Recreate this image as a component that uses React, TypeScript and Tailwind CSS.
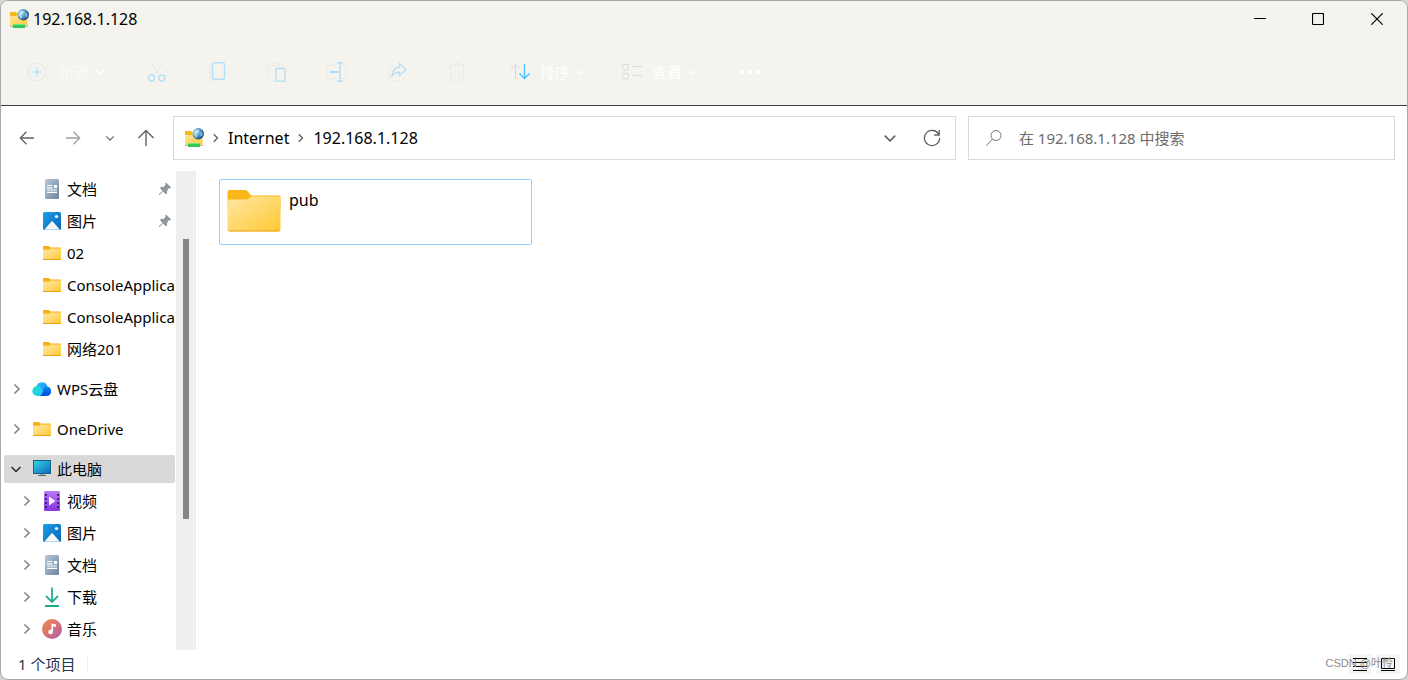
import * as React from "react";

type IconProps = { className?: string };

const Chevron = ({ className = "" }: IconProps) => (
  <svg viewBox="0 0 12 12" fill="none" stroke="currentColor" className={`shrink-0 ${className}`}>
    <path d="M4.500 1.500 9 6 4.500 10.500" strokeWidth="1.600" />
  </svg>
);

const ChevronDown = ({ className = "" }: IconProps) => (
  <svg viewBox="0 0 12 12" fill="none" stroke="currentColor" className={`shrink-0 ${className}`}>
    <path d="M1.500 4 6 8.500 10.500 4" strokeWidth="1.400" />
  </svg>
);

const NetworkFolder = () => (
  <svg viewBox="0 0 20 20" className="size-5 shrink-0">
    <defs>
      <linearGradient id="netBody" x1="0" y1="0" x2="1" y2="1">
        <stop offset="0" stopColor="#ffe59a" />
        <stop offset="1" stopColor="#ffca3e" />
      </linearGradient>
      <radialGradient id="globe" cx=".35" cy=".35" r=".75">
        <stop offset="0" stopColor="#b9e0f2" />
        <stop offset=".5" stopColor="#4a96c8" />
        <stop offset="1" stopColor="#123a63" />
      </radialGradient>
    </defs>
    <path d="M1 3.700Q1 3 1.700 3H7l2 2v3H1z" fill="#f8b517" />
    <path d="M1 7h6l2-1.500h9.500V17H1z" fill="url(#netBody)" />
    <path d="M1 17.500h18" stroke="#b8b8b8" />
    <rect x="4" y="15" width="12" height="4" fill="#35c759" />
    <path d="M4 15.500h12" stroke="#66ec83" />
    <circle cx="14.300" cy="5.700" r="5.700" fill="url(#globe)" />
    <path d="M11 2.500q2.500-1.500 4 0l-1 2-2 1 1.500 2.500-1.500 2-2.500-3.500q-.5-2 1.500-4z" fill="#d4edf5" opacity=".65" />
    <path d="m16.500 4 2 1.500-.5 3-1.500-1z" fill="#c4e7f1" opacity=".6" />
  </svg>
);

const SmallFolder = () => (
  <svg viewBox="0 0 20 20" className="size-5 shrink-0">
    <defs>
      <linearGradient id="folderSmall" x1="0" y1="0" x2="1" y2="1">
        <stop offset="0" stopColor="#ffe8a5" />
        <stop offset="1" stopColor="#ffc93a" />
      </linearGradient>
    </defs>
    <path d="M1 3.700Q1 3 1.700 3H7l1.500 1.500H18.400q.6 0 .6.600V8H1z" fill="#f6b21b" />
    <path d="M1 6.800h6.300L9 5.500h10v11H1z" fill="url(#folderSmall)" />
    <path d="M1 16.500h18" stroke="#e5a21c" />
  </svg>
);

const LargeFolder = () => (
  <svg viewBox="0 0 54 44" className="h-11 w-[54px] shrink-0">
    <defs>
      <linearGradient id="folderLarge" x1="0" y1="0" x2="1" y2="1">
        <stop offset="0" stopColor="#ffe8a5" />
        <stop offset="1" stopColor="#ffc732" />
      </linearGradient>
    </defs>
    <path d="M.5 2q0-2 2-2H18q1.500 0 2.500 1l3.500 4.500h27.500q2 0 2 2V20H.5z" fill="#f9b818" />
    <path d="M.5 11.500Q.5 9.500 2.500 9.500h16q2 0 3.500-1l1.500-1.300q1-.7 2.500-.7h25.500q2 0 2 2v31q0 2-2 2h-49q-2 0-2-2z" fill="url(#folderLarge)" />
    <path d="M1 40q.5 1 1.500 1h49q1 0 1.500-1" fill="none" stroke="#e8a520" />
  </svg>
);

const DocumentIcon = () => (
  <svg viewBox="0 0 20 20" className="size-5 shrink-0">
    <defs>
      <linearGradient id="doc" x1="0" y1="0" x2="1" y2="1">
        <stop offset="0" stopColor="#b6c8d8" />
        <stop offset="1" stopColor="#6c859f" />
      </linearGradient>
    </defs>
    <rect x="3" y="0" width="14" height="20" rx="1.500" fill="url(#doc)" />
    <path d="M5 6.500h5.500M5 8.800h5.500M5 11h10M5 13.300h10" stroke="#fff" strokeWidth="1.200" />
    <rect x="12" y="6" width="3" height="3" fill="#fff" />
  </svg>
);

const PictureIcon = () => (
  <svg viewBox="0 0 20 20" className="size-5 shrink-0">
    <defs>
      <linearGradient id="pic" x1="0" y1="0" x2="1" y2="1">
        <stop offset="0" stopColor="#1ca0e8" />
        <stop offset="1" stopColor="#0a62b5" />
      </linearGradient>
    </defs>
    <rect x="1" y="1" width="18" height="18" rx="1.500" fill="url(#pic)" />
    <path d="m2.500 18.200 7-7.700q.6-.7 1.200 0l7 7.700q-.5.500-1.200.5h-13q-.7 0-1-.5z" fill="#f2f8fd" />
    <circle cx="14.500" cy="5.500" r="1.600" fill="#fff" />
  </svg>
);

const CloudIcon = () => (
  <svg viewBox="0 0 20 20" className="size-5 shrink-0">
    <defs>
      <linearGradient id="cloudLeft" x1="0" y1="0" x2="1" y2="1">
        <stop offset="0" stopColor="#1ce0c8" />
        <stop offset="1" stopColor="#23c3ff" />
      </linearGradient>
      <linearGradient id="cloudTop" x1="0" y1="0" x2="1" y2="1">
        <stop offset="0" stopColor="#2cc4ff" />
        <stop offset="1" stopColor="#0a7bf5" />
      </linearGradient>
      <linearGradient id="cloudRight" x1="0" y1="0" x2="0" y2="1">
        <stop offset="0" stopColor="#0a7bf5" />
        <stop offset="1" stopColor="#0650dc" />
      </linearGradient>
    </defs>
    <path d="M4.500 8a5.500 5.500 0 0 1 10.800-.5L14 16H6z" fill="url(#cloudTop)" />
    <path d="M5.300 7a5 5 0 0 1 4.200 2.300L13 17H5.300a5 5 0 0 1 0-10z" fill="url(#cloudLeft)" />
    <path d="M8 17c3-2 3-7.500 7-9.500A4.800 4.800 0 0 1 15 17z" fill="url(#cloudRight)" />
  </svg>
);

const ComputerIcon = () => (
  <svg viewBox="0 0 20 20" className="size-5 shrink-0">
    <defs>
      <linearGradient id="screen" x1="0" y1="0" x2="1" y2="1">
        <stop offset="0" stopColor="#35d6df" />
        <stop offset="1" stopColor="#0b6ac0" />
      </linearGradient>
    </defs>
    <rect x="1.500" y="1.500" width="17" height="13" fill="url(#screen)" stroke="#185f86" />
    <path d="M8 15h4v2H8z" fill="#9aa7ae" />
    <path d="M6 16.500h8" stroke="#596970" />
  </svg>
);

const VideoIcon = () => (
  <svg viewBox="0 0 20 20" className="size-5 shrink-0">
    <defs>
      <linearGradient id="video" x1="0" y1="0" x2="0" y2="1">
        <stop offset="0" stopColor="#b77af3" />
        <stop offset="1" stopColor="#8636dd" />
      </linearGradient>
    </defs>
    <rect x="2" y="0" width="16" height="20" rx="1.500" fill="url(#video)" />
    <path d="M4 3v16M16 3v16" stroke="#45207b" strokeWidth="2" strokeDasharray="2 2" />
    <path d="M7 5.500v9l6.500-4.500z" fill="#f6efff" />
  </svg>
);

const DownloadIcon = () => (
  <svg viewBox="0 0 20 20" fill="none" className="size-5 shrink-0">
    <path d="M10 .5V14.500M4 9l6 6 6-6" stroke="#20ad94" strokeWidth="1.800" />
    <path d="M3 19h14" stroke="#1aaf82" strokeWidth="2" />
  </svg>
);

const MusicIcon = () => (
  <svg viewBox="0 0 20 20" className="size-5 shrink-0">
    <defs>
      <linearGradient id="music" x1="0" y1="0" x2="1" y2="1">
        <stop offset="0" stopColor="#f28a50" />
        <stop offset=".5" stopColor="#d77474" />
        <stop offset="1" stopColor="#a65bb5" />
      </linearGradient>
    </defs>
    <circle cx="10" cy="10" r="10" fill="url(#music)" />
    <path d="M9.500 4.500 14 5.500V8l-3-.7v5.500a2.300 2.300 0 1 1-1.500-2z" fill="#fff" />
  </svg>
);

const PinIcon = () => (
  <svg viewBox="0 0 14 14" className="ml-auto mr-[3px] size-3.5 shrink-0">
    <path d="M8.300.8 13.200 5.500 12 6.500 10.800 6.300 9 9l.2 2.200-1.200 1-3-2.700L1.500 13H.8v-.8L4.500 9 2 6l1-1.200 2.300.1L7.500 3l-.3-1.300z" fill="#8b969e" />
  </svg>
);

// Line icons of the command bar: pale frame plus blue accent
const toolIcons = [
  {
    label: "剪切",
    icon: (
      <>
        <path d="M5 1.500 13 14M15 1.500 7 14" stroke="#e7e8e5" />
        <circle cx="4.500" cy="16" r="3" stroke="#b5e0f7" strokeWidth="1.400" />
        <circle cx="14.800" cy="16" r="3" stroke="#b5e0f7" strokeWidth="1.400" />
      </>
    ),
  },
  {
    label: "复制",
    icon: (
      <>
        <path d="M5 4Q3 4 3 6v11q0 2.500 2.500 2.500h7" stroke="#e9eae7" />
        <rect x="5.500" y=".7" width="12" height="16.500" rx="2" stroke="#b5e0f7" strokeWidth="1.400" />
      </>
    ),
  },
  {
    label: "粘贴",
    icon: (
      <>
        <path d="M6 2H3Q1.500 2 1.500 3.500v14Q1.500 19 3 19h5M12 2h2q1.500 0 1.500 1.500V6" stroke="#e9eae7" />
        <rect x="5.500" y=".7" width="7" height="3" rx="1.500" stroke="#e9eae7" />
        <rect x="9" y="6.500" width="9" height="13" rx="1.500" stroke="#b5e0f7" strokeWidth="1.400" />
      </>
    ),
  },
  {
    label: "重命名",
    icon: (
      <>
        <path d="M11 3H3Q.5 3 .5 5.500v8Q.5 16.500 3 16.500h8M15 3h2q2.500 0 2.500 2.500v8q0 3-2.500 3h-2" stroke="#e9eae7" />
        <path d="M3 10h8.500" stroke="#a9dcf7" strokeWidth="2" />
        <path d="M10 .8h6M10 19.300h6M13 1v18.500" stroke="#b5e0f7" strokeWidth="1.500" />
      </>
    ),
  },
  {
    label: "共享",
    icon: (
      <>
        <path d="M8 3H4.500Q2 3 2 5.500v11Q2 19 4.500 19H14q2.500 0 2.500-2.500V15" stroke="#e9eae7" />
        <path d="M12.500 1.500 19 7.500l-6.500 6v-3.200Q8 10 5 14q.5-8 7.500-9z" stroke="#b5e0f7" strokeWidth="1.400" />
      </>
    ),
  },
  {
    label: "删除",
    icon: (
      <path d="M1.500 3.500h17M7.500 3.500a2.500 2.500 0 0 1 5 0M3 3.500l1.500 14q.2 2 2 2h7q1.800 0 2-2L17 3.500M8 8.500v6.500M12 8.500v6.500" stroke="#e9eae7" strokeWidth="1.200" />
    ),
  },
];

type TreeItem = {
  name: string;
  icon: React.ReactNode;
  pinned?: boolean;
  expandable?: boolean;
};

const quickAccess: TreeItem[] = [
  { name: "文档", icon: <DocumentIcon />, pinned: true },
  { name: "图片", icon: <PictureIcon />, pinned: true },
  { name: "02", icon: <SmallFolder /> },
  { name: "ConsoleApplication1", icon: <SmallFolder /> },
  { name: "ConsoleApplication2", icon: <SmallFolder /> },
  { name: "网络201", icon: <SmallFolder /> },
];

const computerItems: TreeItem[] = [
  { name: "视频", icon: <VideoIcon />, expandable: true },
  { name: "图片", icon: <PictureIcon />, expandable: true },
  { name: "文档", icon: <DocumentIcon />, expandable: true },
  { name: "下载", icon: <DownloadIcon />, expandable: true },
  { name: "音乐", icon: <MusicIcon />, expandable: true },
];

const TreeRow = ({ name, icon, pinned, expandable }: TreeItem) => (
  <button className="flex h-7 w-full items-center gap-1 overflow-hidden pl-4 text-left">
    <span className="flex w-[18px] shrink-0">
      {expandable && <Chevron className="size-3 text-[#858585]" />}
    </span>
    {icon}
    <span className="ml-px whitespace-nowrap">{name}</span>
    {pinned && <PinIcon />}
  </button>
);

const RootRow = ({ name, icon, open }: TreeItem & { open?: boolean }) => (
  <button
    className={`flex h-7 w-full items-center gap-1 rounded-xs pl-1.5 text-left ${open ? "bg-[#d9d9d9]" : ""}`}
  >
    <span className="flex w-[18px] shrink-0">
      {open ? (
        <ChevronDown className="size-3 text-[#222]" />
      ) : (
        <Chevron className="size-3 text-[#858585]" />
      )}
    </span>
    {icon}
    <span className="ml-px whitespace-nowrap">{name}</span>
  </button>
);

const TitleBar = () => (
  <header className="flex h-9 items-center justify-between pl-2">
    <div className="flex items-center gap-1">
      <NetworkFolder />
      <h1 className="text-base">192.168.1.128</h1>
    </div>
    <div className="flex">
      <button aria-label="最小化" className="flex h-9 w-[58px] items-center justify-center">
        <svg viewBox="0 0 12 12" className="size-3" stroke="#000">
          <path d="M0 5.500h12" />
        </svg>
      </button>
      <button aria-label="最大化" className="flex h-9 w-[58px] items-center justify-center">
        <svg viewBox="0 0 12 12" className="size-3" fill="none" stroke="#000">
          <rect x=".5" y=".5" width="11" height="11" rx="1" strokeWidth="1.200" />
        </svg>
      </button>
      <button aria-label="关闭" className="flex h-9 w-[60px] items-center justify-center">
        <svg viewBox="0 0 12 12" className="size-3" stroke="#000">
          <path d="m.3.3 11.400 11.400M11.700.3.3 11.700" strokeWidth="1.200" />
        </svg>
      </button>
    </div>
  </header>
);

const CommandBar = () => (
  <div className="flex h-[69px] items-center border-b border-[#3c3c3c] pt-0.5 pl-[26px] text-[15px] text-white">
    <button className="flex w-[106px] items-center">
      <svg viewBox="0 0 20 20" className="size-5" fill="none">
        <circle cx="10" cy="10" r="9" stroke="#e7e8e5" />
        <path d="M10 5.500v9M5.500 10h9" stroke="#a9dcf7" strokeWidth="1.200" />
      </svg>
      <span className="ml-3 text-[#fafaf8]">新建</span>
      <ChevronDown className="ml-1.5 size-2.5" />
    </button>
    <div className="flex gap-3">
      {toolIcons.map(({ label, icon }) => (
        <button key={label} aria-label={label} className="flex h-12 w-12 items-center justify-center">
          <svg viewBox="0 0 20 20" className="size-5" fill="none">
            {icon}
          </svg>
        </button>
      ))}
    </div>
    <div className="ml-2.5 h-9 w-px bg-[#f1f1ec]" />
    <button className="ml-[18px] flex items-center">
      <svg viewBox="0 0 20 20" className="size-5" fill="none">
        <path d="M5.500 17V2.500M.5 7.500l5-5 5 5" stroke="#d9dad7" />
        <path d="M14.500 2v15M9.500 11.500l5 5 5-5" stroke="#4cc2ff" strokeWidth="1.400" />
      </svg>
      <span className="ml-2.5">排序</span>
      <ChevronDown className="ml-1.5 size-2.5" />
    </button>
    <button className="ml-9 flex items-center">
      <svg viewBox="0 0 20 20" className="size-5" fill="none" stroke="#d9dad7">
        <rect x=".5" y="2.500" width="6" height="5.500" rx="1.500" />
        <rect x=".5" y="11.500" width="6" height="5.500" rx="1.500" />
        <path d="M10 4.500h10M10 13.500h10" />
      </svg>
      <span className="ml-2.5">查看</span>
      <ChevronDown className="ml-1.5 size-2.5" />
    </button>
    <button aria-label="更多" className="ml-10 flex items-center">
      <svg viewBox="0 0 24 20" className="h-5 w-6" fill="currentColor">
        <circle cx="4" cy="10" r="2.200" />
        <circle cx="12" cy="10" r="2.200" />
        <circle cx="20" cy="10" r="2.200" />
      </svg>
    </button>
  </div>
);

const NavigationBar = () => (
  <div className="flex h-16 items-center gap-[18px] pr-3 pl-[18px]">
    <nav className="flex items-center text-[#616161]">
      <button aria-label="后退">
        <svg viewBox="0 0 16 16" className="size-4" fill="none" stroke="currentColor">
          <path d="M15 8H1.500M7.500 1.800 1.300 8l6.200 6.200" strokeWidth="1.300" />
        </svg>
      </button>
      <button aria-label="前进" className="ml-[30px] text-[#a0a0a0]">
        <svg viewBox="0 0 16 16" className="size-4" fill="none" stroke="currentColor">
          <path d="M1 8h13.500M8.500 1.800 14.700 8l-6.200 6.200" strokeWidth="1.300" />
        </svg>
      </button>
      <button aria-label="最近浏览的位置" className="ml-6">
        <ChevronDown className="size-2.5" />
      </button>
      <button aria-label="向上" className="ml-[22px]">
        <svg viewBox="0 0 18 18" className="size-[18px]" fill="none" stroke="currentColor">
          <path d="M9 17V1.500M1.500 9 9 1.500 16.500 9" strokeWidth="1.400" />
        </svg>
      </button>
    </nav>
    <div className="grid min-w-0 flex-1 grid-cols-[11fr_6fr] gap-3">
      <div className="flex h-11 min-w-0 items-center border border-[#d9d9d9] pr-3.5 pl-2.5 text-base">
        <NetworkFolder />
        <Chevron className="ml-1.5 size-2.5 text-[#616161]" />
        <button className="ml-2">Internet</button>
        <Chevron className="ml-1.5 size-2.5 text-[#616161]" />
        <button className="ml-2">192.168.1.128</button>
        <button aria-label="以前的位置" className="ml-auto text-[#616161]">
          <ChevronDown className="size-3.5" />
        </button>
        <button aria-label="刷新" className="ml-[26px] text-[#616161]">
          <svg viewBox="0 0 18 18" className="size-[18px]" fill="none" stroke="currentColor">
            <path d="M16 6A7.600 7.600 0 1 0 16.600 9M16.200 1v5h-5" strokeWidth="1.300" />
          </svg>
        </button>
      </div>
      <label className="flex h-11 min-w-0 items-center gap-4 border border-[#d9d9d9] px-4">
        <svg viewBox="0 0 18 18" className="size-[18px] shrink-0" fill="none" stroke="#777">
          <circle cx="11" cy="6.500" r="5" />
          <path d="M7.500 10 1.500 16.500" />
        </svg>
        <input
          type="search"
          aria-label="搜索"
          placeholder="在 192.168.1.128 中搜索"
          className="min-w-0 flex-1 bg-transparent text-[15px] outline-none placeholder:text-[#6b6b6b]"
        />
      </label>
    </div>
  </div>
);

const Sidebar = () => (
  <aside className="flex w-[195px] shrink-0">
    <div className="flex min-w-0 flex-1 flex-col gap-3 overflow-hidden pt-1 pr-px pl-[3px] text-[15px]">
      <div className="flex flex-col gap-1">
        {quickAccess.map((item) => (
          <TreeRow key={item.name} {...item} />
        ))}
      </div>
      <RootRow name="WPS云盘" icon={<CloudIcon />} />
      <RootRow name="OneDrive" icon={<SmallFolder />} />
      <div className="flex flex-col gap-1">
        <RootRow name="此电脑" icon={<ComputerIcon />} open />
        <div className="flex flex-col gap-1">
          {computerItems.map((item) => (
            <TreeRow key={item.name} {...item} />
          ))}
        </div>
      </div>
    </div>
    <div className="flex w-5 shrink-0 justify-center bg-[#efefef] pt-[68px]">
      <div className="h-[280px] w-1.5 bg-[#858585]" />
    </div>
  </aside>
);

const StatusBar = () => (
  <footer className="relative flex h-[29px] shrink-0 items-center justify-between pr-[7px] pb-0.5 pl-[17px] text-[15px] text-[#1f3552]">
    <span className="border-r border-[#f0f0f0] pr-3 leading-4">1 个项目</span>
    <div className="flex gap-1">
      <button aria-label="详细信息" className="flex h-5 w-6 items-center justify-center bg-[#f5f5f5]">
        <svg viewBox="0 0 14 14" className="size-3.5" stroke="#000">
          <path d="M0 1.500h14M0 5.500h14M0 9.500h14M0 13.500h14" />
        </svg>
      </button>
      <button aria-label="大缩略图" className="flex h-5 w-6 items-center justify-center bg-[#f5f5f5]">
        <svg viewBox="0 0 14 14" className="size-3.5" fill="none" stroke="#000">
          <path d="M.5 1.500h13v10H.5zM0 13.500h14" />
        </svg>
      </button>
    </div>
    <span className="pointer-events-none absolute right-3.5 font-['Liberation_Sans','Noto_Sans_CJK_SC',sans-serif] text-[11px] text-[#8c8c8c]">
      CSDN @叶怜
    </span>
  </footer>
);

export default function App() {
  return (
    <div className="h-screen bg-[#d5d5d5] font-['Noto_Sans','Noto_Sans_CJK_SC',sans-serif] text-black">
      <div className="flex h-full flex-col overflow-hidden rounded-lg border border-[#a8a8a8] bg-white">
        <div className="shrink-0 bg-[#f4f3ed]">
          <TitleBar />
          <CommandBar />
        </div>
        <NavigationBar />
        <div className="flex min-h-0 flex-1 pt-px">
          <Sidebar />
          <main className="ml-0.5 flex-1 border-l border-[#f7f7f7] px-5 py-2">
            <button className="flex h-[66px] w-[313px] items-start rounded-xs border border-[#99d1ff] pt-2.5 pl-[7px] text-base">
              <LargeFolder />
              <span className="ml-2 leading-5">pub</span>
            </button>
          </main>
        </div>
        <StatusBar />
      </div>
    </div>
  );
}
